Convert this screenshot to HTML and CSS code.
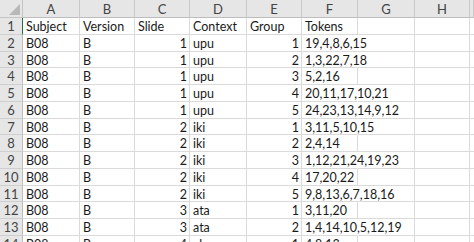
FILE: index.html
```html
<!DOCTYPE html>
<html lang="en">
<head>
  <meta charset="UTF-8">
  <title>Tokens</title>
  <link rel="stylesheet" href="styles.css">
</head>
<body>
  <div class="sheet" id="sheet">
    <div class="corner"><span class="tri"></span></div>
    <div class="colhead">A</div>
    <div class="colhead">B</div>
    <div class="colhead">C</div>
    <div class="colhead">D</div>
    <div class="colhead">E</div>
    <div class="colhead">F</div>
    <div class="colhead">G</div>
    <div class="colhead">H</div>
    <div class="colhead"></div>
  </div>

  <script>
    const rows = [
      ['Subject', 'Version', 'Slide', 'Context', 'Group', 'Tokens'],
      ['B08', 'B', 1, 'upu', 1, '19,4,8,6,15'],
      ['B08', 'B', 1, 'upu', 2, '1,3,22,7,18'],
      ['B08', 'B', 1, 'upu', 3, '5,2,16'],
      ['B08', 'B', 1, 'upu', 4, '20,11,17,10,21'],
      ['B08', 'B', 1, 'upu', 5, '24,23,13,14,9,12'],
      ['B08', 'B', 2, 'iki', 1, '3,11,5,10,15'],
      ['B08', 'B', 2, 'iki', 2, '2,4,14'],
      ['B08', 'B', 2, 'iki', 3, '1,12,21,24,19,23'],
      ['B08', 'B', 2, 'iki', 4, '17,20,22'],
      ['B08', 'B', 2, 'iki', 5, '9,8,13,6,7,18,16'],
      ['B08', 'B', 3, 'ata', 1, '3,11,20'],
      ['B08', 'B', 3, 'ata', 2, '1,4,14,10,5,12,19'],
      ['B08', 'B', 4, 'ala', 1, '4,8,13']
    ];

    const sheet = document.getElementById('sheet');
    rows.forEach((r, i) => {
      const num = document.createElement('div');
      num.className = 'rowhead' + (i === 0 ? ' active' : '');
      num.textContent = i + 1;
      sheet.appendChild(num);

      const spill = String(r[5]).length > 8;
      for (let c = 0; c < 9; c++) {
        const cell = document.createElement('div');
        cell.className = 'cell';
        const v = r[c];
        if (typeof v === 'number') cell.classList.add('num');
        if (c === 5 && spill) cell.classList.add('spill');
        if (v !== undefined) cell.textContent = v;
        sheet.appendChild(cell);
      }
    });
  </script>
</body>
</html>
```

FILE: styles.css
```css
body {
  margin: 0;
  background: #fff;
  overflow: hidden;
}
.sheet {
  display: grid;
  grid-template-columns: 23px 57px 55px 55px 57px 55px 56px 57px 55px 4px;
  grid-template-rows: 18px;
  grid-auto-rows: 16.77px;
  font-family: Lato, "Open Sans", sans-serif;
  font-size: 12.5px;
  color: #1a1a1a;
}
.corner {
  background: #e6e6e6;
  border-right: 1px solid #c4c4c4;
  border-bottom: 1px solid #c4c4c4;
  position: relative;
}
.tri {
  position: absolute;
  right: 2px;
  bottom: 2px;
  width: 0;
  height: 0;
  border-left: 11px solid transparent;
  border-bottom: 11px solid #b8b8b8;
}
.colhead {
  background: #e6e6e6;
  border-right: 1px solid #c9c9c9;
  border-bottom: 1px solid #bdbdbd;
  color: #444;
  text-align: center;
  line-height: 18px;
  font-size: 13px;
}
.rowhead {
  background: #e6e6e6;
  border-right: 1px solid #bdbdbd;
  border-bottom: 1px solid #cfcfcf;
  color: #444;
  text-align: center;
  line-height: 17px;
  font-size: 13px;
}
.rowhead.active {
  border-right-color: #217346;
}
.cell {
  border-right: 1px solid #dadada;
  border-bottom: 1px solid #dadada;
  padding: 0 3px;
  line-height: 17px;
  white-space: nowrap;
  overflow: visible;
  position: relative;
}
.cell.num {
  text-align: right;
  padding-right: 2px;
}
.cell.spill {
  border-right-color: transparent;
}
```
